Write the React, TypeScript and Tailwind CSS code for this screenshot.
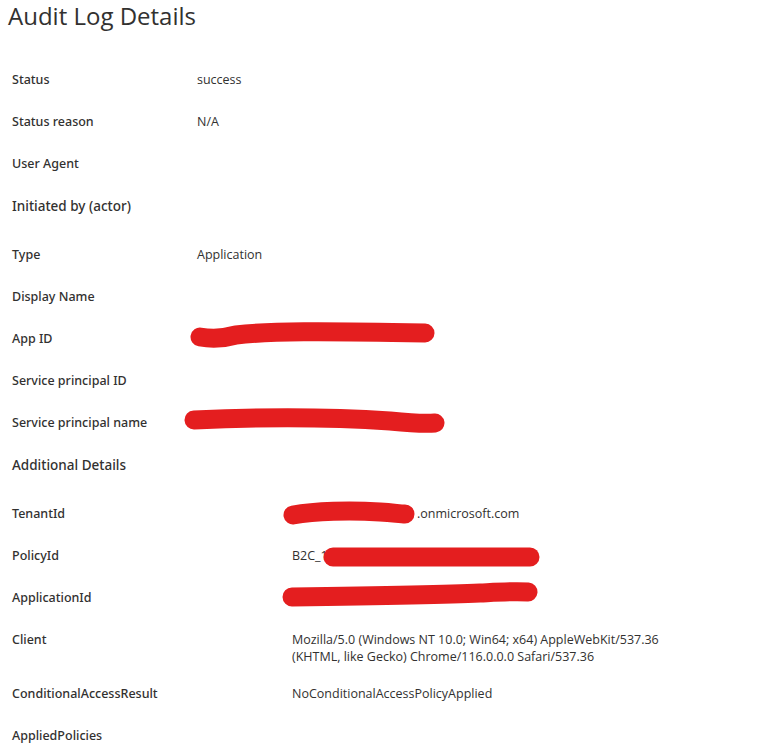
import React from 'react';

type Row = {
  label: string;
  value?: React.ReactNode;
  tall?: boolean;
};

const topRows: Row[] = [
  { label: 'Status', value: 'success' },
  { label: 'Status reason', value: 'N/A' },
  { label: 'User Agent' },
];

const actorRows: Row[] = [
  { label: 'Type', value: 'Application' },
  { label: 'Display Name' },
  { label: 'App ID' },
  { label: 'Service principal ID' },
  { label: 'Service principal name' },
];

const extraRows: Row[] = [
  // tenant prefix sits under the red marker, only the domain shows
  { label: 'TenantId', value: <span className="pl-[125px]">.onmicrosoft.com</span> },
  { label: 'PolicyId', value: 'B2C_1' },
  { label: 'ApplicationId', value: '' },
  {
    label: 'Client',
    value: (
      <>
        Mozilla/5.0 (Windows NT 10.0; Win64; x64) AppleWebKit/537.36
        <br />
        (KHTML, like Gecko) Chrome/116.0.0.0 Safari/537.36
      </>
    ),
    tall: true,
  },
  { label: 'ConditionalAccessResult', value: 'NoConditionalAccessPolicyApplied' },
  { label: 'AppliedPolicies' },
];

const labelFont = { fontFamily: '"Segoe UI", "Noto Sans", sans-serif' };

function DetailRow({ row, labelWidth }: { row: Row; labelWidth: string }) {
  if (row.tall) {
    return (
      <div className="flex h-[54px] items-start pt-[13px] pl-[12px] text-[12.5px] leading-[17px]">
        <div className={`${labelWidth} shrink-0 font-medium`} style={labelFont}>
          {row.label}
        </div>
        <div>{row.value}</div>
      </div>
    );
  }
  return (
    <div className="flex h-[42px] items-center pt-[2px] pl-[12px] text-[12.5px] leading-[18px]">
      <div className={`${labelWidth} shrink-0 font-medium`} style={labelFont}>
        {row.label}
      </div>
      <div className="whitespace-nowrap">{row.value}</div>
    </div>
  );
}

function SectionHeader({ title }: { title: string }) {
  return (
    <div className="h-[49px] pt-[12px] pl-[12px] text-[13.5px] leading-[20px] font-medium" style={labelFont}>
      {title}
    </div>
  );
}

// red marker strokes hiding ids, drawn over the page
function Redactions() {
  return (
    <svg
      className="pointer-events-none absolute left-0 top-0"
      width="764"
      height="755"
      viewBox="0 0 764 755"
      fill="none"
      stroke="#e41e1f"
      strokeWidth="19"
      strokeLinecap="round"
      strokeLinejoin="round"
    >
      <path d="M200 337 C 212 339, 222 339, 236 335 C 270 331, 320 331, 425 333" />
      <path d="M194 420 C 260 417, 330 417, 390 421 C 410 423, 425 424, 435 423" />
      <path d="M293 515 C 315 511, 350 510, 380 512 C 395 513, 400 514, 405 514" />
      <path d="M333 557 L 530 557" />
      <path d="M292 597 C 370 596, 440 595, 480 593 C 500 592, 515 591, 528 592" />
    </svg>
  );
}

export default function App() {
  return (
    <div
      className="relative h-[755px] w-[764px] overflow-hidden bg-white text-[#323130]"
      style={{ fontFamily: '"Segoe UI", "Open Sans", sans-serif' }}
    >
      <div className="h-[58px] pl-[8px] text-[24px] leading-[32px]">Audit Log Details</div>
      {topRows.map((r) => (
        <DetailRow key={r.label} row={r} labelWidth="w-[185px]" />
      ))}
      <SectionHeader title="Initiated by (actor)" />
      {actorRows.map((r) => (
        <DetailRow key={r.label} row={r} labelWidth="w-[185px]" />
      ))}
      <SectionHeader title="Additional Details" />
      {extraRows.map((r) => (
        <DetailRow key={r.label} row={r} labelWidth="w-[280px]" />
      ))}
      <Redactions />
    </div>
  );
}
